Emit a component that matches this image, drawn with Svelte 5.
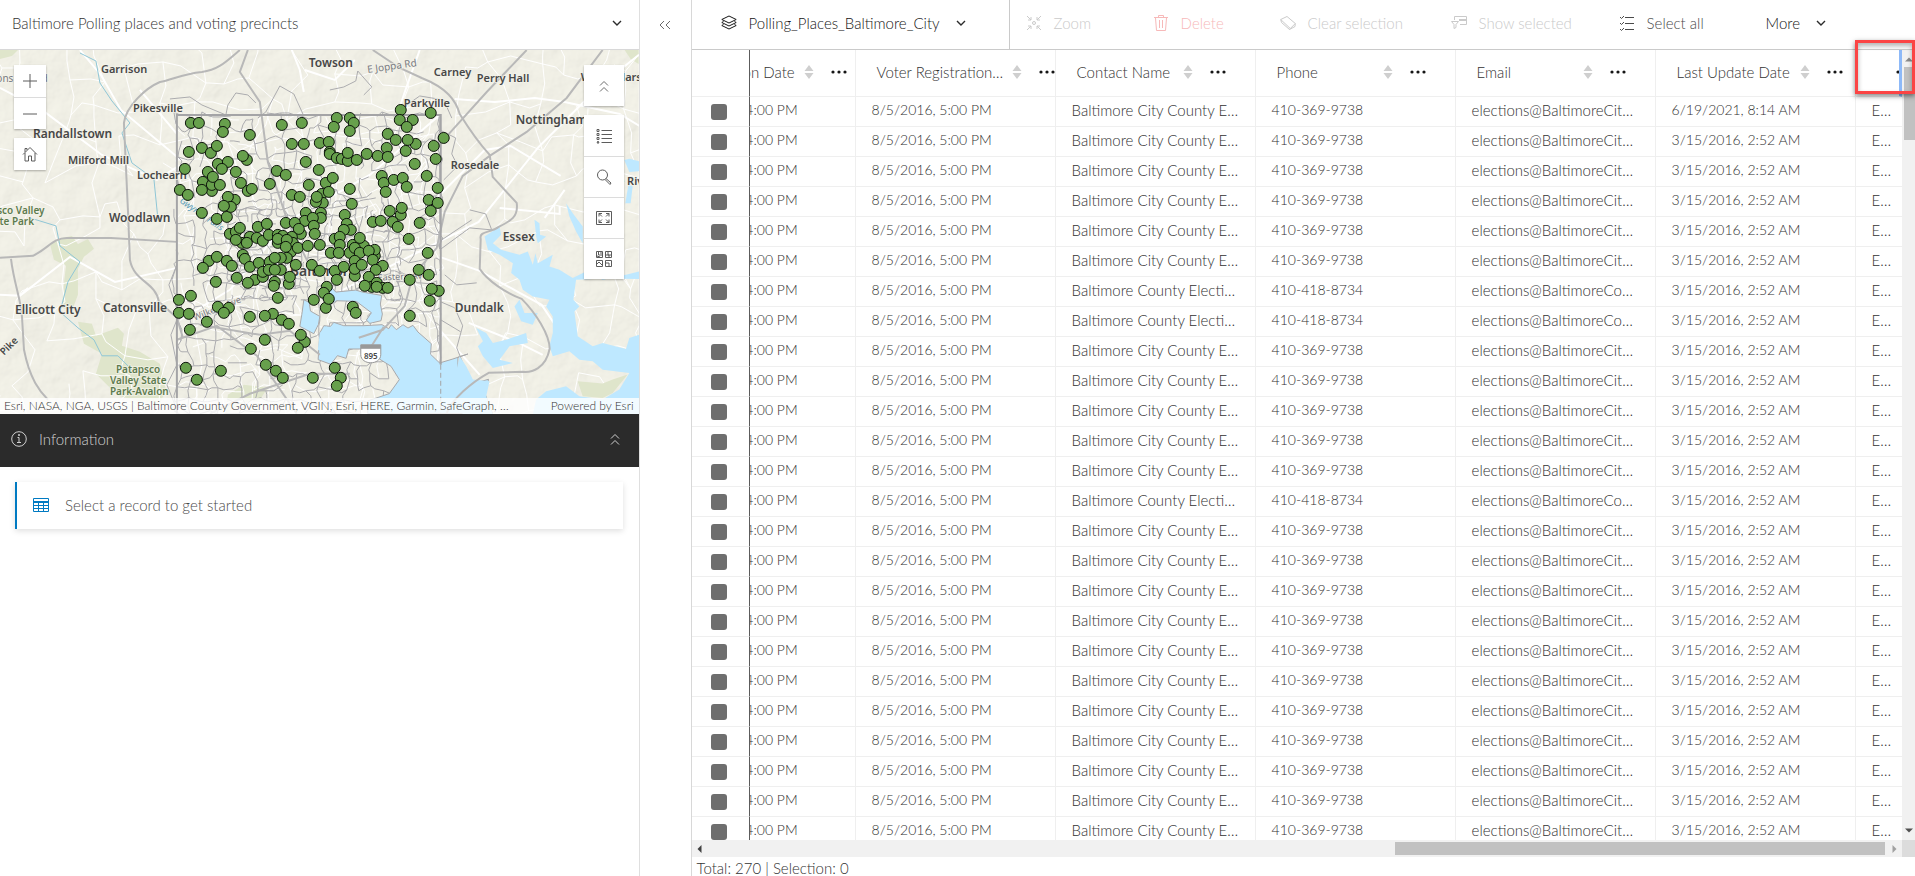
<script lang="ts">
  type Label = {
    text: string;
    x: number;
    y: number;
    size: number;
    kind?: string;
    rotate?: number;
  };

  const pollingPlaces = [
    [191, 73], [199, 73], [225, 74], [223, 82], [250, 85], [282, 75], [302, 73], [337, 68],
    [350, 68], [354, 73], [334, 77], [350, 81], [401, 60], [400, 70], [413, 70], [407, 77],
    [431, 63], [444, 88], [388, 84], [396, 90], [416, 94], [408, 90], [406, 101], [387, 98],
    [434, 96], [436, 109], [415, 114], [292, 94], [304, 94], [320, 93], [329, 92], [330, 102],
    [330, 104], [337, 108], [342, 109], [348, 111], [348, 103], [357, 110], [367, 104], [378, 106],
    [388, 107], [189, 102], [202, 98], [211, 103], [217, 96], [218, 114], [228, 112], [222, 119],
    [247, 110], [243, 106], [185, 119], [208, 122], [236, 122], [306, 112], [277, 121], [286, 125],
    [319, 120], [326, 133], [333, 128], [203, 132], [212, 141], [212, 135], [213, 127], [202, 140],
    [220, 135], [180, 140], [188, 145], [241, 133], [248, 141], [252, 139], [270, 134], [309, 135],
    [292, 145], [300, 147], [322, 144], [329, 142], [323, 153], [316, 152], [317, 147], [350, 139],
    [352, 154], [382, 126], [384, 133], [394, 130], [403, 128], [407, 137], [386, 142], [427, 126],
    [438, 138], [429, 150], [438, 153], [431, 161], [390, 161], [401, 165], [402, 158], [393, 172],
    [398, 177], [373, 172], [381, 171], [420, 173], [409, 189], [428, 203], [202, 163], [217, 169],
    [227, 167], [235, 150], [228, 147], [231, 157], [224, 156], [345, 165], [347, 174], [351, 180],
    [344, 180], [306, 163], [321, 163], [321, 168], [305, 171], [313, 168], [314, 176], [315, 184],
    [286, 173], [295, 173], [301, 184], [299, 179], [258, 177], [267, 174], [230, 184], [236, 182],
    [240, 178], [242, 193], [236, 190], [250, 187], [247, 193], [257, 188], [263, 191], [269, 185],
    [278, 185], [278, 193], [283, 186], [278, 189], [292, 187], [293, 193], [287, 190], [291, 202],
    [286, 197], [298, 198], [308, 196], [320, 195], [335, 189], [340, 187], [340, 195], [331, 203],
    [339, 203], [353, 195], [364, 196], [360, 188], [350, 203], [355, 198], [375, 206], [375, 200],
    [360, 203], [369, 201], [209, 211], [217, 207], [203, 218], [227, 211], [232, 216], [243, 205],
    [245, 209], [250, 217], [259, 213], [216, 232], [237, 228], [255, 230], [248, 233], [263, 227],
    [263, 222], [270, 212], [287, 208], [281, 208], [275, 208], [269, 220], [281, 220], [275, 220],
    [296, 215], [289, 234], [290, 227], [275, 232], [274, 236], [278, 248], [312, 215], [320, 221],
    [335, 221], [344, 217], [337, 230], [355, 211], [355, 226], [355, 219], [362, 215], [373, 210],
    [383, 216], [376, 220], [369, 227], [372, 237], [365, 236], [377, 233], [383, 238], [377, 237],
    [388, 238], [327, 237], [324, 243], [326, 258], [329, 249], [314, 250], [353, 257], [356, 263],
    [410, 230], [419, 220], [429, 225], [439, 241], [432, 239], [430, 251], [410, 266], [179, 250],
    [191, 246], [179, 263], [189, 264], [190, 280], [207, 272], [218, 257], [229, 258], [224, 263],
    [250, 267], [273, 264], [265, 266], [282, 270], [289, 274], [305, 292], [301, 285], [298, 298],
    [265, 290], [251, 299], [186, 318], [197, 330], [221, 321], [266, 315], [276, 321], [283, 328],
    [313, 328], [335, 318], [341, 328], [337, 336],
  ];

  const labels: Label[] = [
    { text: 'Lyons Mill Rd', x: -14, y: 32, size: 10, kind: 'road' },
    { text: 'Garrison', x: 101, y: 23, size: 11 },
    { text: 'Pikesville', x: 133, y: 62, size: 11 },
    { text: 'Randallstown', x: 33, y: 88, size: 12 },
    { text: 'Milford Mill', x: 68, y: 114, size: 11 },
    { text: 'Lochearn', x: 137, y: 129, size: 11 },
    { text: 'Woodlawn', x: 109, y: 172, size: 12 },
    { text: 'Ellicott City', x: 15, y: 264, size: 12 },
    { text: 'Catonsville', x: 103, y: 262, size: 12 },
    { text: 'Towson', x: 309, y: 17, size: 12 },
    { text: 'E Joppa Rd', x: 368, y: 23, size: 10, kind: 'road', rotate: -8 },
    { text: 'Carney', x: 434, y: 26, size: 11 },
    { text: 'Perry Hall', x: 477, y: 32, size: 11 },
    { text: 'White Marsh', x: 581, y: 31, size: 11 },
    { text: 'Parkville', x: 404, y: 57, size: 11 },
    { text: 'Nottingham', x: 516, y: 74, size: 12 },
    { text: 'Rosedale', x: 451, y: 119, size: 11 },
    { text: 'Middle River', x: 588, y: 135, size: 11 },
    { text: 'Essex', x: 503, y: 191, size: 12 },
    { text: 'Dundalk', x: 455, y: 262, size: 12 },
    { text: 'Baltimore', x: 290, y: 226, size: 14 },
    { text: 'Eastern Ave', x: 378, y: 231, size: 9, kind: 'road', rotate: -3 },
    { text: 'Wilkens Ave', x: 195, y: 271, size: 9, kind: 'road', rotate: -22 },
    { text: 'Gwynns Falls', x: 179, y: 152, size: 9, kind: 'stream', rotate: 35 },
    { text: 'Patapsco Valley', x: -31, y: 164, size: 10, kind: 'park' },
    { text: 'State Park', x: -16, y: 175, size: 10, kind: 'park' },
    { text: 'Patapsco', x: 116, y: 323, size: 10, kind: 'park' },
    { text: 'Valley State', x: 110, y: 334, size: 10, kind: 'park' },
    { text: 'Park-Avalon', x: 110, y: 345, size: 10, kind: 'park' },
    { text: 'Pike', x: 4, y: 306, size: 10, rotate: -45 },
  ];

  // small seeded generator so the street pattern is the same on every load
  function random(seed: number) {
    let s = seed;
    return () => {
      s = (s * 16807) % 2147483647;
      return s / 2147483647;
    };
  }

  function streets(
    seed: number,
    x0: number,
    y0: number,
    x1: number,
    y1: number,
    step: number,
    jitter: number,
    keep: number,
  ) {
    const next = random(seed);
    const cols = Math.ceil((x1 - x0) / step) + 1;
    const rows = Math.ceil((y1 - y0) / step) + 1;
    const points: number[][][] = [];
    for (let r = 0; r < rows; r++) {
      points.push([]);
      for (let c = 0; c < cols; c++) {
        points[r].push([
          Math.min(x1, Math.round(x0 + c * step + (next() - 0.5) * jitter)),
          Math.min(y1, Math.round(y0 + r * step + (next() - 0.5) * jitter)),
        ]);
      }
    }
    let d = '';
    const link = (a: number[], b: number[]) => {
      const mx = Math.round((a[0] + b[0]) / 2 + (next() - 0.5) * jitter * 0.6);
      const my = Math.round((a[1] + b[1]) / 2 + (next() - 0.5) * jitter * 0.6);
      d += `M${a[0]} ${a[1]}L${mx} ${my}L${b[0]} ${b[1]}`;
    };
    for (let r = 0; r < rows; r++) {
      for (let c = 0; c < cols; c++) {
        if (c + 1 < cols && next() < keep) link(points[r][c], points[r][c + 1]);
        if (r + 1 < rows && next() < keep) link(points[r][c], points[r + 1][c]);
      }
    }
    return d;
  }

  const localRoads = streets(11, -10, -10, 650, 370, 34, 26, 0.72);
  const cityRoads = streets(5, 180, 68, 440, 364, 15, 10, 0.5);
  const precincts = streets(23, 178, 66, 440, 364, 13, 9, 0.66);
  const downtown = streets(41, 230, 150, 400, 250, 8, 5, 0.55);

  const countyRows = [6, 7, 13];
  const records = Array.from({ length: 25 }, (_, i) => {
    const county = countyRows.includes(i);
    return {
      id: i,
      contact: county ? 'Baltimore County Electi…' : 'Baltimore City County E…',
      phone: county ? '410-418-8734' : '410-369-9738',
      email: county ? 'elections@BaltimoreCo…' : 'elections@BaltimoreCit…',
      updated: i === 0 ? '6/19/2021, 8:14 AM' : '3/15/2016, 2:52 AM',
    };
  });

  const columns = ['Voter Registration…', 'Contact Name', 'Phone', 'Email', 'Last Update Date'];
</script>

{#snippet chevron()}
  <svg class="chevron" width="10" height="6" viewBox="0 0 10 6" aria-hidden="true">
    <path d="M1 1l4 4 4-4" fill="none" stroke="currentColor" stroke-width="1.4" />
  </svg>
{/snippet}

{#snippet doubleUp()}
  <svg width="16" height="16" viewBox="0 0 16 16" aria-hidden="true">
    <path d="M4 7.5l4-4 4 4M4 13.5l4-4 4 4" fill="none" stroke="currentColor" />
  </svg>
{/snippet}

{#snippet headTools(label: string)}
  <button class="sort" aria-label="Sort by {label}">
    <svg width="10" height="14" viewBox="0 0 10 14">
      <path d="M5 0l4.5 6h-9zM5 14l4.5-6h-9z" fill="#cfcfcf" />
    </svg>
  </button>
  <button class="dots" aria-label="{label} options">
    <svg width="16" height="4" viewBox="0 0 16 4">
      <circle cx="2" cy="2" r="1.6" /><circle cx="8" cy="2" r="1.6" /><circle cx="14" cy="2" r="1.6" />
    </svg>
  </button>
{/snippet}

<div class="app">
  <aside class="side">
    <button class="map-picker">
      <span>Baltimore Polling places and voting precincts</span>
      {@render chevron()}
    </button>

    <div class="map">
      <svg class="basemap" viewBox="0 0 639 364" preserveAspectRatio="xMidYMid slice" role="img" aria-label="Map of polling places">
        <defs>
          <filter id="relief" x="0" y="0" width="100%" height="100%">
            <feTurbulence type="fractalNoise" baseFrequency="0.035" numOctaves="4" seed="8" />
            <feDiffuseLighting lighting-color="#f7f6ee" surfaceScale="2.2" diffuseConstant="1.08">
              <feDistantLight azimuth="225" elevation="66" />
            </feDiffuseLighting>
          </filter>
        </defs>
        <rect width="639" height="364" fill="#edece1" />
        <rect width="639" height="364" filter="url(#relief)" opacity="0.4" />

        <g fill="#dfe5cb">
          <path d="M0 0h18l-6 6-12 3zM50 194l12-6 10-2 6 8 10-5 6 10-10 8-6 12 0 26-6 16-10-3 2-24 2-18-12-6z" />
          <path d="M78 272l14 2 4 12 22-8 6 6-2 12 18 6 20 12 6 26-6 14-18-2-24-6-22-22 6-20-18-10z" />
          <path d="M625 0h14v14l-8-5z" />
          <path d="M228 345l16-10 24 3-8 12-20 4-14 10z" />
        </g>

        <path class="roads" d={localRoads} />
        <g class="main-roads">
          <path d="M80 0l21 25 20 35 60 50M140 40l37 44M0 38l42 22 60 45 55 25 22-14" />
          <path d="M0 245l20 1 50-39 45 25 62-14M20 246l8-8" />
          <path d="M420 0l-15 42-8 24M455 49l40 3 40-4 30 4 55 12 20 12" />
          <path d="M639 5l-40 32-60 60-60 75-80 40-60 30" />
          <path d="M440 207l40 14 40 22 22 12 20 30M440 280l40 45M469 273l50 20 24 12" />
          <path d="M292 0l8 20 4 22M305 20l30 10 20-20" />
          <path d="M180 270l50-30 60-70 80-45 70-60" />
          <path d="M500 158l60 6 0-8M545 168l20-28" />
          <path d="M425 160l60-60 26-4 50 30" />
        </g>
        <path class="stream" d="M80 3l16 8 4 22 12 18 18 22-8 10 10 30 22 16 4 40M30 168l26 8 4 20 20 16-12 20-8 30 18 16 16 12 8 16 16 0 14 14" />

        <path class="roads" d={cityRoads} />
        <path class="precincts" d={precincts} />
        <path class="precincts" d={downtown} />
        <path class="precincts" d="M170 49l20-2 12 8 24 10 2-10 8-12 12 2 8 8M258 68l8-6 14-26 14 8 10 22M330 40l14-3 12-6 2-10 14 16-8 8M400 60l20-14 24 4 8 18M440 80l16 8-4 16 6 12-14 14M440 200l30-22 22 2-6-16-16-4M442 190l30-20M177 215l-8 20 10 30-8 20 6 30-10 20 8 20 16 10M441 252l14 6 8 18-6 22 8 20-18 4M441 270l20 12M445 225l12 10 20-2" />

        <g class="water" transform="translate(320 150) scale(0.333)">
          <path
            class="shore"
            d="M0 400l12-22 20 2 10-12 30 10 60 0 55-3 20 12 8-12 15 15 20-15 15 10 15-8 15 20 40 35-2 32 27 26 40-12 45-15-30 10 0 60 50 18 42-12-10 45 22 58-375 0 0-38 65-22 30-42-25-40-35-22 0-30-92 0-8 28-26-8-20 26-38-14z"
          />
          <path class="shore" d="M5 275l25-18 18 20 60-6 20 6 58 10-4 26 6 30-4 20-34 8-10-10 15-22-45-34-60-2-20 14-22-18z" />
          <path class="shore" d="M-48 300l16 8 4 26 28 16-4 24-14 28-42-22 6-36z" />
          <path d="M20 380l-20 20-6 50 30 14 30-26z" />
          <path
            d="M495 110L510 100 540 80 545 105 520 130 545 150 600 165 625 155 640 195 648 160 655 190 700 165 690 200 720 210 760 235 800 215 850 240 920 225 960 215 960 238 850 236 770 240 762 300 780 320 765 335 775 410 820 440 850 430 920 448 930 415 960 405 960 645 640 645 650 600 680 575 740 560 780 590 850 600 900 570 930 520 850 510 820 485 780 480 750 455 700 470 690 440 700 400 700 350 680 320 690 300 640 290 610 270 600 240 575 220 580 190 540 165 505 150Z"
          />
          <path d="M740 10L760 40 790 80 790 130 770 95 750 50ZM645 60L660 70 662 105 680 110 655 130 650 110Z" />
          <path d="M470 385L500 400 520 430 560 420 620 400 625 430 570 440 540 480 580 490 520 505 490 470 475 440 490 425ZM600 300L615 340 655 340 640 375 605 365 585 320Z" />
          <path d="M420 470L440 500 460 540 510 545 500 590 520 645 430 645 400 560Z" />
          <path d="M775 545L850 552 880 540 925 525 880 580 850 595 790 590Z" fill="#dfe5cb" />
          <path d="M915-120L930-124 960-116 960-86 930-84ZM918 10L928-50 940-40 934 10Z" />
        </g>

        <g class="highways">
          <path d="M240 0c-14 12-22 20-38 22-20 2-30 8-42 10-14 6-34 24-36 41l4 87 2 50c4 22 26 22 29 42l18 16 6 20" />
          <path d="M0 208l33-2c16-8 20-18 34-18h44l66 4M11 209c3 25 10 40 11 58l2 33c6 30 16 42 24 50" />
          <path d="M373 0l27 18 22 10c25 10 34 22 38 36 10 16 20 30 30 41l3 22 24 26c2 14-6 18-18 24-8 6-20 4-18 12l-1 30c8 12 26 24 42 30 14 14 28 36 28 50-4 20-18 24-27 23l-34 1c-18 10-36 26-42 40" />
          <path d="M603 0l-36 48-40 34-37 24-27 20-18 36-8 36-24 28-8 30-22 24-24 8M384 277l-14 22" />
          <path d="M527 0l-40 42-27 30-18 20" />
          <path d="M248 0l-8 22 20 30 8 60 20 60 20 40M177 290l40-14 40 30 40 58M210 364l40-20 60-20 40 0M200 275l60 10 30-4 30 24" />
        </g>
        <path class="boundary" d="M177 364V65h264v250" />
        <path class="boundary dashed" d="M441 315v49" />

        {#each labels as label}
          <text
            class={label.kind ?? 'place'}
            x={label.x}
            y={label.y}
            font-size={label.size}
            transform={label.rotate ? `rotate(${label.rotate} ${label.x} ${label.y})` : undefined}
            >{label.text}</text
          >
        {/each}

        <path d="M361 295h20v10c0 5-5 8-10 8s-10-3-10-8z" fill="#fff" stroke="#999" />
        <path d="M361 295h20v4h-20z" fill="#999" />
        <text class="shield" x="371" y="309" font-size="8" text-anchor="middle">895</text>

        {#each pollingPlaces as [x, y]}
          <circle class="place-dot" cx={x} cy={y} r="5.5" />
        {/each}
      </svg>

      <div class="tools left">
        <div class="group">
          <button aria-label="Zoom in">
            <svg width="16" height="16" viewBox="0 0 16 16"><path d="M8 1v14M1 8h14" /></svg>
          </button>
          <button aria-label="Zoom out">
            <svg width="16" height="16" viewBox="0 0 16 16"><path d="M1 8h14" /></svg>
          </button>
        </div>
        <div class="group">
          <button aria-label="Default extent">
            <svg width="16" height="16" viewBox="0 0 16 16">
              <path d="M1 8.500L8 1.500l7 7M3 7v8h3.500v-5h3v5H13V7M3 6V2.500h2V4" />
            </svg>
          </button>
        </div>
      </div>

      <div class="tools right">
        <div class="group">
          <button aria-label="Collapse tools">{@render doubleUp()}</button>
        </div>
        <div class="group">
          <button aria-label="Legend">
            <svg width="16" height="16" viewBox="0 0 16 16">
              <path d="M5.5 2.5H16M5.5 6.5H16M5.5 10.5H16M5.5 14.5H16M1 1.5h2v2H1zM1 5.5h2v2H1zM1 9.5h2v2H1zM1 15l1-2 1 2z" />
            </svg>
          </button>
          <button aria-label="Search">
            <svg width="16" height="16" viewBox="0 0 16 16">
              <circle cx="6.5" cy="6" r="5" /><path d="M10 9.5l5 4.5-1 1.5-5-5" />
            </svg>
          </button>
          <button aria-label="Full screen">
            <svg width="16" height="16" viewBox="0 0 16 16">
              <path d="M.5 1.5h15v13H.5zM3 6.5v-3h3M3 3.5l3 3M13 6.5v-3h-3M13 3.5l-3 3M3 9.5v3h3M3 12.5l3-3M13 9.5v3h-3M13 12.5l-3-3" />
            </svg>
          </button>
          <button aria-label="Basemap">
            <svg width="16" height="16" viewBox="0 0 16 16">
              <path d="M.5.5h6v6h-6zM9.5.5h6v6h-6zM.5 9.5h6v6h-6zM9.5 9.5h6v6h-6zM2.5 1v3h4M1 5l3 1M12 1v3h3M10 4h3v2M1 13l2-2 3 3M10 12h3v3M4 2h2" />
            </svg>
          </button>
        </div>
      </div>

      <div class="attribution">
        <span>Esri, NASA, NGA, USGS | Baltimore County Government, VGIN, Esri, HERE, Garmin, SafeGraph, …</span>
        <span>Powered by <a href="#esri">Esri</a></span>
      </div>
    </div>

    <button class="info-head">
      <svg width="16" height="16" viewBox="0 0 16 16" fill="none" stroke="currentColor" aria-hidden="true">
        <circle cx="8" cy="8" r="7.3" /><path d="M6.5 6.5H8v5M6 11.5h4M7.500 3.5h1v1h-1z" />
      </svg>
      <span>Information</span>
      {@render doubleUp()}
    </button>
    <div class="notice">
      <svg width="16" height="16" viewBox="0 0 16 16" fill="none" stroke="#007ac2" aria-hidden="true">
        <path d="M.5 1.5h15v13H.5zM0 5.5h16M0 8.5h16M0 11.5h16M5.5 5v9M10.5 5v9M1 4.5h14" />
      </svg>
      <p>Select a record to get started</p>
    </div>
  </aside>

  <div class="divider">
    <button aria-label="Collapse panel">
      <svg width="12" height="10" viewBox="0 0 12 10"><path d="M5 1L1 5l4 4M11 1L7 5l4 4" fill="none" stroke="#6a6a6a" /></svg>
    </button>
  </div>

  <main class="content">
    <div class="toolbar">
      <button class="layer-picker">
        <svg width="16" height="16" viewBox="0 0 16 16" fill="none" stroke="currentColor" aria-hidden="true">
          <path d="M.8 4.5L8 1l7.2 3.5L8 8zM2.5 6.5L.8 7.5 8 11l7.2-3.5-1.7-1M2.5 9.5l-1.700 1L8 14l7.2-3.5-1.7-1" />
        </svg>
        <span>Polling_Places_Baltimore_City</span>
        {@render chevron()}
      </button>
      <div class="actions">
        <button disabled>
          <svg width="16" height="16" viewBox="0 0 16 16">
            <path d="M1 1l4 4M5 2v3H2M15 1l-4 4M11 2v3h3M1 15l4-4M5 14v-3H2M15 15l-4-4M11 14v-3h3" />
            <circle cx="8" cy="8" r="1.5" />
          </svg>
          <span>Zoom</span>
        </button>
        <button class="danger" disabled>
          <svg width="16" height="16" viewBox="0 0 16 16">
            <path d="M1 2.5h14M5.5 2V.5h5V2M2.5 3l1 12.5h9l1-12.5M6.500 5v8M9.5 5v8" />
          </svg>
          <span>Delete</span>
        </button>
        <button disabled>
          <svg width="16" height="16" viewBox="0 0 16 16">
            <path d="M.7 4.5L7 1.5l8.3 7-5 5zM.7 4.5L1.5 7.5l8 7 .8-1M9.5 14.5l5.500-3 .3-3" />
          </svg>
          <span>Clear selection</span>
        </button>
        <button disabled>
          <svg width="16" height="16" viewBox="0 0 16 16">
            <path d="M3.500 5V1.5h12v8H9M8 4.5h7.5M8 5.5h7.5M.5 6.5h7L5 9.5v3l-2 1v-4z" />
          </svg>
          <span>Show selected</span>
        </button>
        <button class="dim">
          <svg width="16" height="16" viewBox="0 0 16 16">
            <path d="M6 2.5h9M6 8.5h9M6 14.5h9M1 2l1.5 1.5L5 1M1 8l1.5 1.5L5 7M1 14l1.5 1.5L5 13" />
          </svg>
          <span>Select all</span>
        </button>
        <button class="more">
          <span>More</span>
          {@render chevron()}
        </button>
      </div>
    </div>

    <div class="grid-area">
      <div class="viewport">
        <table>
          <colgroup>
            <col class="pick-col" /><col class="clip-col" />
            {#each columns as column (column)}<col class="wide-col" />{/each}
            <col />
          </colgroup>
          <thead>
            <tr>
              <th class="pick" aria-label="Selection"></th>
              <th class="clipped">
                <div class="head"><span class="tail">on Date</span>{@render headTools('Election Date')}</div>
              </th>
              {#each columns as column (column)}
                <th>
                  <div class="head"><span class="title">{column}</span>{@render headTools(column)}</div>
                </th>
              {/each}
              <th class="resizing">
                <div class="head end">
                  <button class="dots" aria-label="Column options">
                    <svg width="16" height="4" viewBox="0 0 16 4">
                      <circle cx="2" cy="2" r="1.6" /><circle cx="8" cy="2" r="1.6" />
                    </svg>
                  </button>
                </div>
              </th>
            </tr>
          </thead>
          <tbody>
            {#each records as record (record.id)}
              <tr>
                <td class="pick"><input type="checkbox" aria-label="Select record {record.id + 1}" /></td>
                <td class="clipped figure"><div class="tail">4:00 PM</div></td>
                <td class="figure">8/5/2016, 5:00 PM</td>
                <td>{record.contact}</td>
                <td class="figure">{record.phone}</td>
                <td>{record.email}</td>
                <td class="figure">{record.updated}</td>
                <td class="last">E…</td>
              </tr>
            {/each}
          </tbody>
        </table>
      </div>
      <div class="v-bar">
        <svg width="8" height="5" viewBox="0 0 8 5"><path d="M0 4.5L4 .5l4 4z" fill="#8a8a8a" /></svg>
        <div class="thumb"></div>
        <svg width="8" height="5" viewBox="0 0 8 5"><path d="M0 .5h8l-4 4z" fill="#505050" /></svg>
      </div>
      <div class="h-bar">
        <svg width="5" height="8" viewBox="0 0 5 8"><path d="M4.5 0v8l-4-4z" fill="#404040" /></svg>
        <div class="thumb"></div>
        <svg width="5" height="8" viewBox="0 0 5 8"><path d="M.5 0v8l4-4z" fill="#a0a0a0" /></svg>
      </div>
      <div class="corner"></div>
    </div>
    <footer>Total: 270 | Selection: 0</footer>
    <div class="callout"></div>
  </main>
</div>

<style>
  :global(body) {
    margin: 0;
  }
  .app {
    display: flex;
    height: 100vh;
    overflow: hidden;
    background: #fff;
    color: #323232;
    font-family: Lato, 'Open Sans', sans-serif;
    font-size: 15px;
    font-weight: 300;
    line-height: 20px;
  }
  button {
    display: flex;
    align-items: center;
    padding: 0;
    border: 0;
    background: none;
    color: inherit;
    font: inherit;
    text-align: left;
    cursor: pointer;
  }
  svg {
    flex: none;
  }

  .side {
    display: flex;
    flex-direction: column;
    box-sizing: border-box;
    width: 33.4%;
    border-right: 1px solid #dfdfdf;
  }
  .map-picker {
    box-sizing: border-box;
    justify-content: space-between;
    height: 50px;
    padding: 0 17px 3px 12px;
    border-bottom: 1px solid #d8d8d8;
  }
  .chevron {
    color: #2b2b2b;
  }

  .map {
    position: relative;
    aspect-ratio: 639 / 364;
    overflow: hidden;
  }
  .basemap {
    display: block;
    width: 100%;
    height: 100%;
    font-family: 'Noto Sans', sans-serif;
  }
  .roads,
  .main-roads,
  .highways,
  .precincts,
  .stream,
  .boundary {
    fill: none;
  }
  .roads {
    stroke: #fff;
  }
  .main-roads {
    stroke: #fff;
    stroke-width: 2;
  }
  .highways {
    stroke: #b8b8b8;
    stroke-width: 2;
  }
  .precincts {
    stroke: #acacaf;
  }
  .stream {
    stroke: #8fc6d6;
  }
  .boundary {
    stroke: #a4a4a6;
    stroke-width: 2;
  }
  .dashed {
    stroke-dasharray: 5 3;
    stroke-width: 1;
  }
  .water {
    fill: #bee8ff;
  }
  .shore {
    stroke: #a9a9ab;
    stroke-width: 3;
  }
  text {
    font-weight: 600;
    fill: #474747;
    stroke: #f4f3ea;
    stroke-width: 2;
    stroke-opacity: 0.7;
    paint-order: stroke;
  }
  .road {
    font-weight: 400;
    fill: #77797f;
  }
  .stream:is(text) {
    font-style: italic;
    font-weight: 400;
    fill: #5a9db8;
    stroke: none;
  }
  .park {
    fill: #5d7b4e;
  }
  .shield {
    stroke: none;
  }
  .place-dot {
    fill: #67a04c;
    stroke: #0c140a;
  }

  .tools {
    position: absolute;
    top: 15px;
    display: flex;
    flex-direction: column;
    gap: 9px;
  }
  .left {
    left: 14px;
  }
  .right {
    right: 15px;
  }
  .group {
    background: #fff;
    box-shadow: 0 1px 2px rgba(0, 0, 0, 0.3);
  }
  .group button {
    justify-content: center;
    width: 32px;
    height: 32px;
    color: #6e6e6e;
  }
  .right button {
    width: 40px;
    height: 41px;
  }
  .group button + button {
    border-top: 1px solid #dcdcdc;
  }
  .group svg {
    fill: none;
    stroke: #5c5c5c;
  }
  .attribution {
    position: absolute;
    inset: auto 0 0;
    display: flex;
    justify-content: space-between;
    padding: 0 5px 0 4px;
    background: rgba(255, 255, 255, 0.8);
    color: #323232;
    font-size: 12px;
    line-height: 16px;
    white-space: nowrap;
  }
  .attribution a {
    color: inherit;
    text-decoration: none;
  }

  .info-head {
    gap: 12px;
    height: 53px;
    padding: 0 16px 2px 11px;
    background: #2b2b2b;
    color: #d0d0d0;
  }
  .info-head span {
    flex: 1;
  }
  .notice {
    display: flex;
    align-items: center;
    gap: 16px;
    margin: 15px 16px 15px 15px;
    padding: 0 16px;
    height: 47px;
    border-left: 2px solid #007ac2;
    box-shadow: 0 2px 6px rgba(0, 0, 0, 0.13);
    color: #4a4a4a;
  }
  .notice p {
    margin: 0;
  }

  .divider {
    display: flex;
    flex: 0 0 51px;
    justify-content: center;
  }
  .divider button {
    height: 50px;
  }

  .content {
    position: relative;
    display: flex;
    flex: 1;
    flex-direction: column;
    min-width: 0;
    border-left: 1px solid #d8d8d8;
  }
  .toolbar {
    display: flex;
    box-sizing: border-box;
    height: 50px;
    border-bottom: 1px solid #cacaca;
    color: #151515;
  }
  .layer-picker {
    box-sizing: border-box;
    width: 318px;
    gap: 12px;
    padding: 0 0 3px 29px;
    border-right: 1px solid #cacaca;
  }
  .layer-picker .chevron {
    margin-left: 4px;
  }
  .actions {
    display: grid;
    grid-template-columns: 127px 127px 171px 168px 147px auto;
    padding: 0 0 3px 16px;
  }
  .actions button {
    gap: 12px;
    white-space: nowrap;
  }
  .actions button:disabled {
    color: #cacaca;
    cursor: default;
  }
  .actions .danger:disabled {
    color: #f7b9b9;
  }
  .actions svg {
    fill: none;
    stroke: currentColor;
  }
  .actions .dim {
    color: #4a4a4a;
  }
  .actions .more {
    gap: 16px;
  }

  .grid-area {
    display: grid;
    flex: 1;
    grid-template: minmax(0, 1fr) 17px / minmax(0, 1fr) 13px;
    min-height: 0;
  }
  .viewport {
    overflow: hidden;
  }
  table {
    width: 100%;
    border-collapse: separate;
    border-spacing: 0;
    table-layout: fixed;
  }
  .pick-col {
    width: 58px;
  }
  .clip-col {
    width: 106px;
  }
  .wide-col {
    width: 200px;
  }
  th,
  td {
    box-sizing: border-box;
    overflow: hidden;
    border-right: 1px solid #efefef;
    border-bottom: 1px solid #efefef;
    font-weight: 300;
    text-align: left;
    white-space: nowrap;
  }
  th {
    height: 47px;
    padding: 0 0 2px 21px;
  }
  td {
    height: 30px;
    padding: 0 0 4px 16px;
  }
  .figure {
    font-size: 14px;
  }
  .pick {
    padding: 0 0 0 19px;
    border-right: 1px solid #5c5c5c;
  }
  .clipped {
    padding-left: 0;
  }
  .head {
    display: flex;
    align-items: center;
  }
  .title {
    min-width: 106px;
    padding-right: 10px;
    box-sizing: border-box;
  }
  .tail {
    display: flex;
    justify-content: flex-end;
    width: 45px;
    overflow: hidden;
  }
  td .tail {
    width: 48px;
  }
  .head .tail {
    margin-right: 9px;
  }
  .dots {
    margin-left: 17px;
  }
  .dots svg {
    fill: #151515;
  }
  .end .dots {
    margin-left: 19px;
  }
  .resizing {
    border-right: 3px solid #8db9f8;
  }
  .last {
    border-right: 0;
  }
  input {
    display: block;
    width: 16px;
    height: 16px;
    margin: 0;
    border-radius: 3px;
    background: #6e6e6e;
    appearance: none;
  }

  .v-bar {
    display: flex;
    flex-direction: column;
    align-items: center;
    padding: 7px 0;
    background: #f1f1f1;
  }
  .v-bar svg:last-child {
    margin-top: auto;
  }
  .v-bar .thumb {
    align-self: flex-end;
    width: 11px;
    height: 73px;
    margin-top: 5px;
    background: #c1c1c1;
  }
  .h-bar {
    display: flex;
    align-items: center;
    padding: 0 5px;
    background: #f1f1f1;
  }
  .h-bar .thumb {
    width: 490px;
    height: 13px;
    margin: 0 7px 0 auto;
    background: #c1c1c1;
  }
  .corner {
    background: #dcdcdc;
  }
  footer {
    height: 19px;
    padding-left: 5px;
    line-height: 22px;
    overflow: hidden;
  }
  .callout {
    position: absolute;
    top: 40px;
    right: 0;
    box-sizing: border-box;
    width: 60px;
    height: 54px;
    border: 3px solid #fb4444;
    box-shadow:
      0 2px 5px rgba(0, 0, 0, 0.5),
      inset 0 3px 5px rgba(0, 0, 0, 0.3);
    pointer-events: none;
  }
</style>
